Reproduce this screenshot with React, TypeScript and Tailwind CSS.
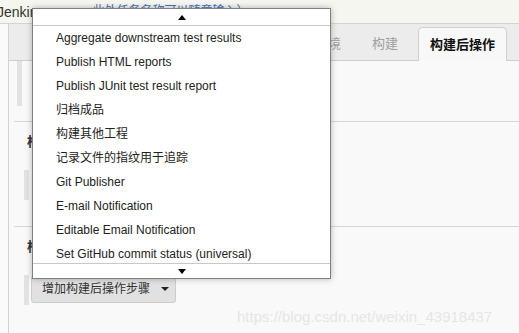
import React from 'react';

const FONT = '"Liberation Sans", Arial, "Noto Sans CJK SC", sans-serif';

const ITEMS = [
  'Aggregate downstream test results',
  'Publish HTML reports',
  'Publish JUnit test result report',
  '归档成品',
  '构建其他工程',
  '记录文件的指纹用于追踪',
  'Git Publisher',
  'E-mail Notification',
  'Editable Email Notification',
  'Set GitHub commit status (universal)',
];

function Tabs() {
  return (
    <div className="h-[37px] bg-[#ececec] border-b border-[#cdcdcd] flex items-end justify-end gap-[9px] pr-[12px]">
      <div className="h-[33px] px-[11px] flex items-center text-[13px] text-[#a0a0a0]">构建环境</div>
      <div className="h-[33px] px-[11px] flex items-center text-[13px] text-[#a0a0a0]">构建</div>
      <div className="h-[34px] -mb-px px-[11px] flex items-center text-[13px] font-bold text-[#111] bg-[#f8f8f8] border border-b-0 border-[#cfcfcf] rounded-t-[5px]">
        构建后操作
      </div>
    </div>
  );
}

function Popup() {
  return (
    <div className="absolute left-[32px] top-[8px] w-[299px] h-[271px] bg-white border border-[#808080] shadow-[0_0_6px_rgba(0,0,0,0.28)] flex flex-col">
      <div className="h-[17px] border-b border-[#c8c8c8] flex items-center justify-center">
        <div className="w-0 h-0 border-x-[4px] border-x-transparent border-b-[5px] border-b-black" />
      </div>
      <div className="h-[237px] overflow-hidden">
        {ITEMS.map((item) => (
          <div key={item} className="h-[24px] pl-[23px] flex items-center text-[12px] text-[#222]">
            {item}
          </div>
        ))}
      </div>
      <div className="flex-1 border-t border-[#c8c8c8] flex items-center justify-center">
        <div className="w-0 h-0 border-x-[4px] border-x-transparent border-t-[5px] border-t-black" />
      </div>
    </div>
  );
}

export default function App() {
  return (
    <div className="relative w-[519px] h-[333px] overflow-hidden bg-[#f9f9f9]" style={{ fontFamily: FONT }}>
      <div className="h-[24px] bg-[#f4f6ef] border-b border-[#d4d4d4] flex items-start pt-[2px]">
        <span className="ml-[-3px] text-[14px] text-[#333]">Jenkins</span>
        <span className="ml-[48px] text-[12px] text-[#4a6fba]">此处任务名称可以随意输入）</span>
      </div>

      <div className="flex h-[309px]">
        <div className="w-[9px] bg-[#fafafa] border-r border-[#d2d2d2]" />
        <div className="flex-1 flex flex-col">
          <Tabs />

          <div className="ml-[5px] h-[61px] border-b border-[#d6d6d6] flex gap-[10px]">
            <div className="ml-[3px] w-[5px] h-[45px] bg-[#e2e2e2]" />
            <div className="mt-[17px] text-[12px] text-[#aaa]">I</div>
          </div>

          <div className="ml-[5px] h-[105px] border-b border-[#d6d6d6] flex flex-col">
            <div className="mt-[10px] ml-[13px] text-[13px] font-bold text-[#333]">构建</div>
            <div className="mt-[18px] ml-[10px] w-[5px] h-[30px] bg-[#e2e2e2]" />
          </div>

          <div className="ml-[5px] flex flex-col">
            <div className="mt-[10px] ml-[13px] text-[13px] font-bold text-[#333]">构建后操作</div>
            <div className="mt-[18px] ml-[10px] flex gap-[2px]">
              <div className="w-[5px] h-[30px] bg-[#e2e2e2]" />
              <div className="w-[145px] h-[28px] bg-[#e1e1e1] border border-[#cccccc] rounded-[3px] flex items-center pl-[10px] gap-[11px]">
                <span className="text-[12px] text-[#333]">增加构建后操作步骤</span>
                <div className="w-0 h-0 border-x-[4px] border-x-transparent border-t-[4px] border-t-[#222]" />
              </div>
            </div>
          </div>
        </div>
      </div>

      <Popup />

      <div className="absolute left-[237px] top-[306px] text-[15px] text-[#e6e6e6]">
        https://blog.csdn.net/weixin_43918437
      </div>
    </div>
  );
}
